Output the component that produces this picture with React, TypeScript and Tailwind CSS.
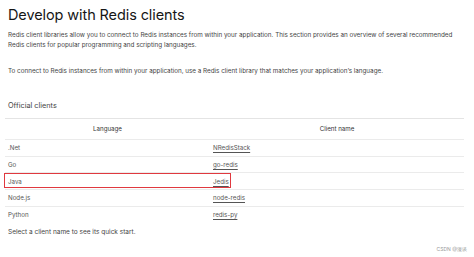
import React from 'react';

const clients = [
  { lang: '.Net', name: 'NRedisStack' },
  { lang: 'Go', name: 'go-redis' },
  { lang: 'Java', name: 'Jedis', marked: true },
  { lang: 'Node.js', name: 'node-redis' },
  { lang: 'Python', name: 'redis-py' },
];

export default function App() {
  return (
    <div
      className="relative w-[474px] h-[257px] bg-white overflow-hidden text-[#333]"
      style={{ fontFamily: 'Inter, "Noto Sans", sans-serif' }}
    >
      <div className="px-[8px] pt-[6px]">
        <h1 className="text-[14.5px] leading-[18px] text-[#161616] tracking-[-0.1px]">
          Develop with Redis clients
        </h1>
        <p className="mt-[6px] text-[6.3px] leading-[10px] text-[#444]">
          Redis client libraries allow you to connect to Redis instances from within your application. This section provides an overview of several recommended
          <br />
          Redis clients for popular programming and scripting languages.
        </p>
        <p className="mt-[16px] text-[6.3px] leading-[10px] text-[#444]">
          To connect to Redis instances from within your application, use a Redis client library that matches your application’s language.
        </p>
        <h2 className="mt-[24px] text-[7.3px] leading-[12px] text-[#444]">Official clients</h2>
      </div>

      {/* table */}
      <div className="ml-[5px] mr-[10px] mt-[6px] border-t-[1.5px] border-[#e4e4e4] text-[6.2px] text-[#555]">
        <div className="grid grid-cols-[205px_1fr] h-[21px] items-center border-b border-[#ebebeb] text-[#333]">
          <div className="text-center">Language</div>
          <div className="text-center">Client name</div>
        </div>
        {clients.map((c, i) => (
          <div
            key={c.lang}
            className={`relative grid grid-cols-[205px_1fr] h-[16.7px] items-center ${
              i < clients.length - 1 ? 'border-b border-[#ebebeb]' : ''
            }`}
          >
            <div className="pl-[3px]">{c.lang}</div>
            <div className="pl-[3px]">
              <span className="underline decoration-[0.5px] underline-offset-[1.5px]">{c.name}</span>
            </div>
            {c.marked && (
              <div className="absolute left-[-1px] top-[0px] w-[227px] h-[15px] border-[1.5px] border-[#e0393f]" />
            )}
          </div>
        ))}
      </div>

      <p className="ml-[8px] mt-[4px] text-[6.5px] leading-[10px] text-[#444]">
        Select a client name to see its quick start.
      </p>

      <div className="absolute right-[7px] bottom-[4px] text-[5px] text-[#999]">CSDN @漫谈</div>
    </div>
  );
}
